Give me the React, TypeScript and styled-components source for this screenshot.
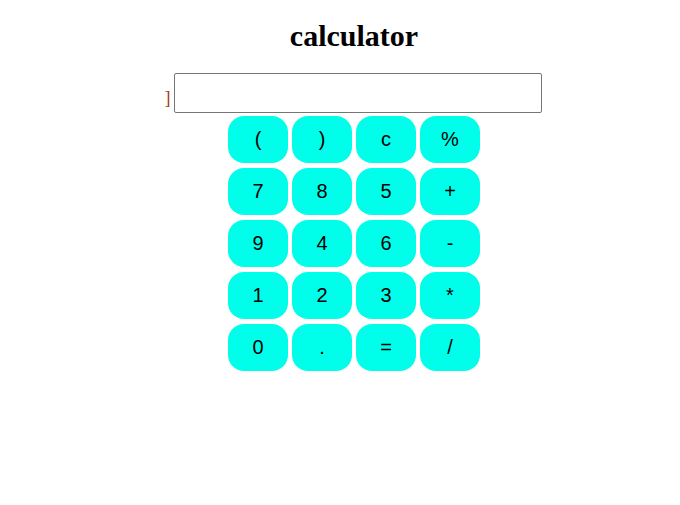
import styled, { createGlobalStyle } from "styled-components";

const GlobalStyle = createGlobalStyle`
  html, body {
    margin: 0;
    padding: 0;
    background: #fff;
  }
`;

const Page = styled.div`
  padding: 0 0 0 28px;
  text-align: center;
  font-family: "Liberation Serif", "Times New Roman", serif;
`;

const Title = styled.h1`
  margin: 0;
  padding-top: 18px;
  height: 54px;
  box-sizing: border-box;
  font-size: 30px;
  line-height: 35px;
  font-weight: bold;
  color: #000;
`;

const DisplayRow = styled.div`
  display: flex;
  justify-content: center;
  align-items: flex-end;
  gap: 3px;
  margin-top: 19px;
  padding-right: 2px;
`;

const Bracket = styled.span`
  color: #a33a10;
  font-size: 18px;
  line-height: 18px;
  padding-bottom: 6px;
`;

const Display = styled.input`
  width: 368px;
  height: 40px;
  box-sizing: border-box;
  border: 1px solid #767676;
  border-radius: 2px;
  padding: 0 4px;
  font-size: 20px;
  font-family: "Liberation Sans", Arial, sans-serif;
  outline: none;
`;

const Keypad = styled.div`
  display: grid;
  grid-template-columns: repeat(4, 60px);
  grid-auto-rows: 47px;
  column-gap: 4px;
  row-gap: 5px;
  justify-content: center;
  margin-top: 3px;
`;

const Key = styled.button`
  border: none;
  border-radius: 16px;
  background: #00ffea;
  color: #000;
  font-family: "Liberation Sans", Arial, sans-serif;
  font-size: 20px;
  padding: 0;
  cursor: pointer;
`;

const keys = [
  "(", ")", "c", "%",
  "7", "8", "5", "+",
  "9", "4", "6", "-",
  "1", "2", "3", "*",
  "0", ".", "=", "/",
];

const App = () => {
  return (
    <>
      <GlobalStyle />
      <Page>
        <Title>calculator</Title>
        <DisplayRow>
          <Bracket>]</Bracket>
          <Display type="text" />
        </DisplayRow>
        <Keypad>
          {keys.map((k) => (
            <Key key={k}>{k}</Key>
          ))}
        </Keypad>
      </Page>
    </>
  );
};

export default App;
